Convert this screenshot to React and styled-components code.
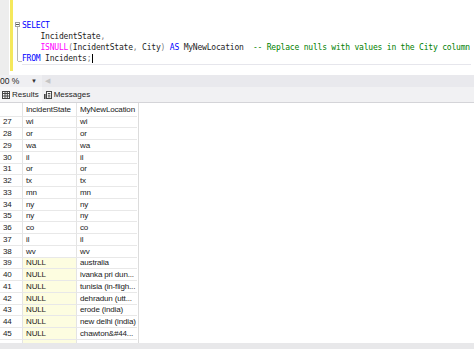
import React from "react";
import styled, { createGlobalStyle } from "styled-components";

const Global = createGlobalStyle`
  html, body { margin: 0; padding: 0; background: #ffffff; }
  body { font-family: "Liberation Sans", Arial, sans-serif; }
`;

const Page = styled.div`
  width: 474px;
  height: 349px;
  overflow: hidden;
  display: flex;
  flex-direction: column;
  background: #fff;
`;

const Editor = styled.div`
  height: 75px;
  display: flex;
  flex-direction: row;
  align-items: flex-start;
  flex-shrink: 0;
`;

const Gutter = styled.div`
  width: 9px;
  height: 75px;
  background: #ededed;
  margin-right: 1px;
`;

const ChangeBar = styled.div`
  width: 3px;
  height: 71px;
  background: #f5e85c;
`;

const Outline = styled.div`
  width: 9px;
  padding-top: 22px;
  display: flex;
  flex-direction: column;
  align-items: center;
`;

const FoldBox = styled.div`
  width: 5px;
  height: 5px;
  box-sizing: border-box;
  border: 1px solid #a0a0a0;
  display: flex;
  align-items: center;
  justify-content: center;
  &::after {
    content: "";
    width: 3px;
    height: 1px;
    background: #555;
  }
`;

const Stem = styled.div`
  width: 1px;
  height: 34px;
  background: #b8b8b8;
`;

const StemTick = styled.div`
  width: 4px;
  height: 1px;
  background: #b8b8b8;
  align-self: flex-end;
`;

const Code = styled.div`
  flex: 1;
  padding-top: 19.5px;
  font-family: "DejaVu Sans Mono", "Liberation Mono", monospace;
  font-size: 8px;
  letter-spacing: -0.2px;
  color: #1e1e1e;
`;

const Line = styled.div`
  height: 11.2px;
  line-height: 11.2px;
  white-space: pre;
  box-sizing: border-box;
  ${(p) =>
    p.$current &&
    `
    height: 12px;
    line-height: 11px;
    border-bottom: 1px solid #e6e6ec;
    margin-right: 3px;
  `}
`;

const Kw = styled.span`
  color: #0000ff;
`;
const Fn = styled.span`
  color: #ff00ff;
`;
const Op = styled.span`
  color: #808080;
`;
const Comment = styled.span`
  color: #008000;
`;
const Caret = styled.span`
  display: inline-block;
  width: 1px;
  height: 9px;
  background: #000;
  margin-left: 1px;
  vertical-align: middle;
`;

const ZoomBar = styled.div`
  height: 12px;
  background: #e9e9ed;
  display: flex;
  align-items: center;
  flex-shrink: 0;
  font-size: 8.5px;
  color: #1e1e1e;
`;

const ZoomCombo = styled.div`
  width: 42px;
  height: 12px;
  display: flex;
  align-items: center;
  overflow: hidden;
  background: #efeff2;
`;

const ZoomText = styled.span`
  flex: 1;
  white-space: pre;
`;

const Arrow = styled.span`
  font-size: 6px;
  color: #333;
  margin-right: 5px;
`;

const ScrollLeft = styled.span`
  font-size: 7px;
  color: #c4c4c4;
  margin-left: 3px;
`;

const TabBar = styled.div`
  height: 15px;
  background: #f1f1f3;
  border-bottom: 1px solid #d4d4d8;
  display: flex;
  align-items: stretch;
  flex-shrink: 0;
`;

const Tab = styled.div`
  display: flex;
  align-items: center;
  gap: 2px;
  padding: 0 3px 0 2px;
  font-size: 8px;
  color: #1e1e1e;
  background: ${(p) => (p.$active ? "#f7f7f8" : "transparent")};
`;

const Results = styled.div`
  flex: 1;
  overflow: hidden;
  display: flex;
  flex-direction: column;
`;

const GridArea = styled.div`
  flex: 1;
  overflow: hidden;
`;

const Grid = styled.div`
  display: grid;
  grid-template-columns: 23px 54px 60px;
  grid-template-rows: 13.5px;
  grid-auto-rows: 11.75px;
  width: 138px;
  border-right: 1px solid #dcdcdc;
  font-family: "Liberation Sans", Arial, sans-serif;
  font-size: 8px;
  letter-spacing: -0.15px;
  color: #1a1a1a;
`;

const Cell = styled.div`
  box-sizing: border-box;
  padding-left: 3px;
  border-bottom: 1px solid #e8e8e8;
  border-right: ${(p) => (p.$last ? "none" : "1px solid #e4e4e4")};
  background: ${(p) => (p.$null ? "#fdfde0" : "#fff")};
  white-space: nowrap;
  overflow: hidden;
  display: flex;
  align-items: center;
`;

const HScroll = styled.div`
  height: 6px;
  background: #e8e8ea;
  flex-shrink: 0;
`;

const GridIcon = () => (
  <svg width="8" height="8" viewBox="0 0 8 8">
    <rect x="0.5" y="0.5" width="7" height="7" fill="#fff" stroke="#444" />
    <line x1="0.5" y1="2.5" x2="7.5" y2="2.5" stroke="#444" />
    <line x1="0.5" y1="5" x2="7.5" y2="5" stroke="#444" />
    <line x1="3" y1="0.5" x2="3" y2="7.5" stroke="#444" />
    <line x1="5.3" y1="0.5" x2="5.3" y2="7.5" stroke="#444" />
  </svg>
);

const MsgIcon = () => (
  <svg width="8" height="8" viewBox="0 0 8 8">
    <rect x="0" y="3" width="1.6" height="5" fill="#444" />
    <rect x="2.5" y="0.5" width="5" height="7" fill="#fff" stroke="#444" />
    <line x1="3.8" y1="2.5" x2="6.4" y2="2.5" stroke="#444" />
    <line x1="3.8" y1="4.2" x2="6.4" y2="4.2" stroke="#444" />
    <line x1="3.8" y1="5.9" x2="6.4" y2="5.9" stroke="#444" />
  </svg>
);

const rows = [
  [27, "wi", "wi"],
  [28, "or", "or"],
  [29, "wa", "wa"],
  [30, "il", "il"],
  [31, "or", "or"],
  [32, "tx", "tx"],
  [33, "mn", "mn"],
  [34, "ny", "ny"],
  [35, "ny", "ny"],
  [36, "co", "co"],
  [37, "il", "il"],
  [38, "wv", "wv"],
  [39, "NULL", "australia"],
  [40, "NULL", "ivanka pri dun..."],
  [41, "NULL", "tunisia (in-fligh..."],
  [42, "NULL", "dehradun (utt..."],
  [43, "NULL", "erode (india)"],
  [44, "NULL", "new delhi (india)"],
  [45, "NULL", "chawton&#44..."],
  [46, "NULL", "guildford (uk)"],
];

export default function App() {
  return (
    <Page>
      <Global />
      <Editor>
        <Gutter />
        <ChangeBar />
        <Outline>
          <FoldBox />
          <Stem />
          <StemTick />
        </Outline>
        <Code>
          <Line>
            <Kw>SELECT</Kw>
          </Line>
          <Line>
            {"    IncidentState"}
            <Op>,</Op>
          </Line>
          <Line>
            {"    "}
            <Fn>ISNULL</Fn>
            <Op>(</Op>
            {"IncidentState"}
            <Op>,</Op>
            {" City"}
            <Op>)</Op>
            {" "}
            <Kw>AS</Kw>
            {" MyNewLocation  "}
            <Comment>-- Replace nulls with values in the City column</Comment>
          </Line>
          <Line $current>
            <Kw>FROM</Kw>
            {" Incidents"}
            <Op>;</Op>
            <Caret />
          </Line>
        </Code>
      </Editor>
      <ZoomBar>
        <ZoomCombo>
          <ZoomText>00 %</ZoomText>
          <Arrow>▼</Arrow>
        </ZoomCombo>
        <ScrollLeft>◀</ScrollLeft>
      </ZoomBar>
      <TabBar>
        <Tab $active>
          <GridIcon />
          Results
        </Tab>
        <Tab>
          <MsgIcon />
          Messages
        </Tab>
      </TabBar>
      <Results>
        <GridArea>
          <Grid>
            <Cell />
            <Cell>IncidentState</Cell>
            <Cell $last>MyNewLocation</Cell>
            {rows.map(([n, a, b]) => (
              <React.Fragment key={n}>
                <Cell>{n}</Cell>
                <Cell $null={a === "NULL"}>{a}</Cell>
                <Cell $last>{b}</Cell>
              </React.Fragment>
            ))}
          </Grid>
        </GridArea>
        <HScroll />
      </Results>
    </Page>
  );
}
